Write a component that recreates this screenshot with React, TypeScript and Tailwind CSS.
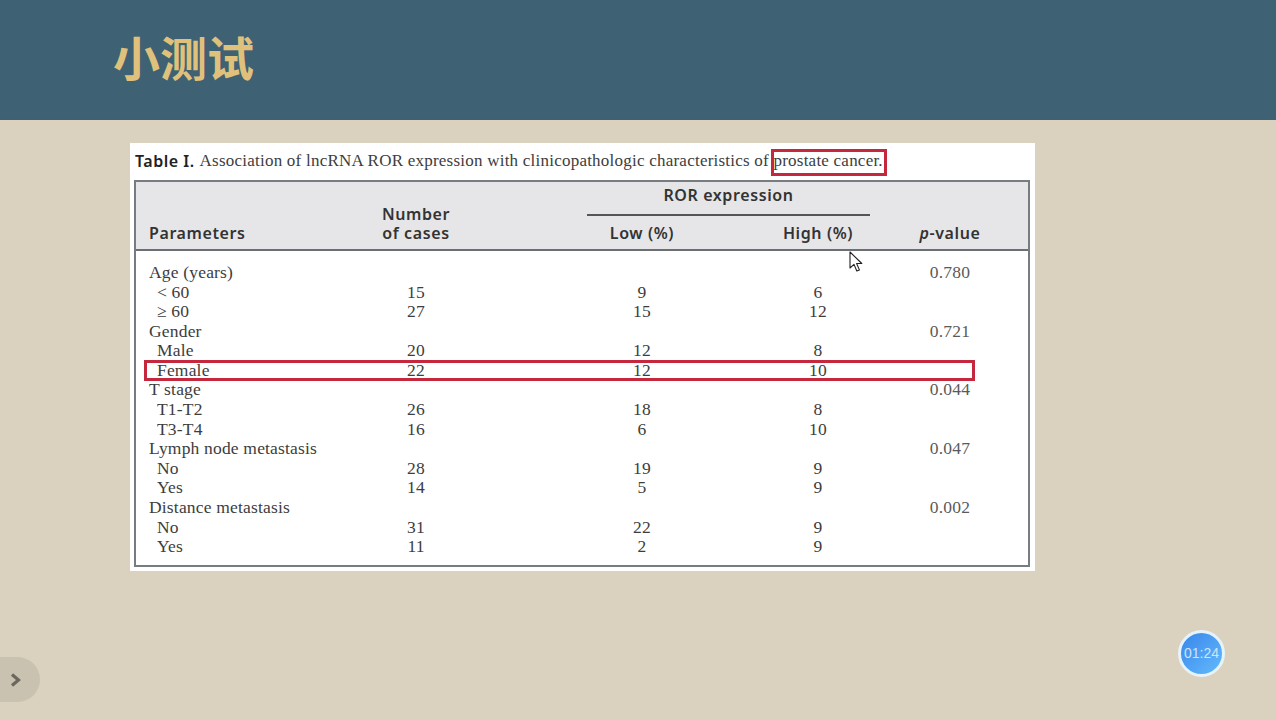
const cols = "grid grid-cols-[165px_204px_248px_104px_160px]";
const sans = "font-['Noto_Sans','Liberation_Sans',sans-serif]";

const rows: [string, string, string, string, string, boolean][] = [
  ["Age (years)", "", "", "", "0.780", false],
  ["< 60", "15", "9", "6", "", true],
  ["≥ 60", "27", "15", "12", "", true],
  ["Gender", "", "", "", "0.721", false],
  ["Male", "20", "12", "8", "", true],
  ["Female", "22", "12", "10", "", true],
  ["T stage", "", "", "", "0.044", false],
  ["T1-T2", "26", "18", "8", "", true],
  ["T3-T4", "16", "6", "10", "", true],
  ["Lymph node metastasis", "", "", "", "0.047", false],
  ["No", "28", "19", "9", "", true],
  ["Yes", "14", "5", "9", "", true],
  ["Distance metastasis", "", "", "", "0.002", false],
  ["No", "31", "22", "9", "", true],
  ["Yes", "11", "2", "9", "", true],
];

function Cursor() {
  return (
    <svg className="absolute left-[849px] top-[251px] h-[22px] w-[14px]" viewBox="0 0 14 22">
      <path d="M1 1v16l4-3.6 2.8 6.6 2.6-1.1-2.8-6.4h5.2z" fill="#fff" stroke="#222" strokeWidth="1.1" strokeLinejoin="round" />
    </svg>
  );
}

export default function App() {
  return (
    <div className="relative flex h-[720px] w-[1276px] flex-col overflow-hidden bg-[#dad2bf]">
      <header className="flex h-[120px] shrink-0 items-center bg-[#3e6174] pb-[10px] pl-[113px]">
        <h1 className="font-['Noto_Sans_CJK_SC',sans-serif] text-[47px] font-bold leading-none text-[#e0c17c]">小测试</h1>
      </header>

      <div className="ml-[130px] mt-[23px] h-[428px] w-[905px] bg-white pl-[4px] pr-[5px] font-['Liberation_Serif',serif] text-[#3d3d3d]">
        <p className="mb-[2px] flex h-[35px] items-center whitespace-nowrap pl-[1px] text-[17px] leading-none tracking-[0.23px] text-[#3d3d3d]">
          <b className={`${sans} mr-[5px] text-[16px] font-semibold tracking-[0.5px] text-[#222]`}>Table I.</b>
          Association of lncRNA ROR expression with clinicopathologic characteristics of prostate cancer.
        </p>
        <div className="h-[387px] border-2 border-[#777c81]">
          <div className={`${cols} h-[69px] border-b-2 border-[#6a6f74] bg-[#e6e6e8] pl-[13px] pb-[6px] ${sans} text-[16px] font-semibold leading-[19px] tracking-[0.6px] text-[#333]`}>
            <div className="self-end whitespace-nowrap">Parameters</div>
            <div className="self-end text-center">Number<br />of cases</div>
            <div className="col-span-2 flex h-full flex-col">
              <div className="ml-[69px] flex flex-1 flex-col justify-start pt-[4px]">
                <div className="text-center">ROR expression</div>
                <div className="mt-[9px] h-[1.5px] bg-[#555]" />
              </div>
              <div className="grid grid-cols-[248px_104px]">
                <div className="text-center">Low (%)</div>
                <div className="text-center">High (%)</div>
              </div>
            </div>
            <div className="self-end text-center"><i>p</i>-value</div>
          </div>
          <div className="pt-[12px] pl-[13px] text-[17.5px] leading-[19.58px] tracking-[0.18px]">
            {rows.map(([label, n, low, high, p, indent], i) => (
              <div key={i} className={cols}>
                <div className={`whitespace-nowrap ${indent ? "pl-[8px]" : ""}`}>{label}</div>
                <div className="text-center">{n}</div>
                <div className="text-center">{low}</div>
                <div className="text-center">{high}</div>
                <div className="text-center text-[#5a5a5a]">{p}</div>
              </div>
            ))}
          </div>
        </div>
      </div>

      {/* highlight boxes drawn over the slide */}
      <div className="absolute left-[771px] top-[149px] h-[27px] w-[116px] border-[3px] border-[#c5283d]" />
      <div className="absolute left-[144px] top-[360px] h-[21px] w-[831px] border-[3px] border-[#c5283d]" />
      <Cursor />

      <div className="absolute left-0 top-[657px] flex h-[45px] w-[40px] items-center rounded-r-full bg-[#c9c2b0] pl-[10px]">
        <svg className="h-[14px] w-[12px]" viewBox="0 0 12 14">
          <path d="M2 1.5 8.5 7 2 12.5" fill="none" stroke="#6b675c" strokeWidth="3.2" />
        </svg>
      </div>

      <div className="absolute left-[1178px] top-[630px] flex h-[47px] w-[47px] items-center justify-center rounded-full border-[3px] border-[#e6f3fb] bg-gradient-to-br from-[#3a86ea] to-[#63bafc] font-['Liberation_Sans',sans-serif] text-[14px] text-[#cfe4fa]">
        01:24
      </div>
    </div>
  );
}
